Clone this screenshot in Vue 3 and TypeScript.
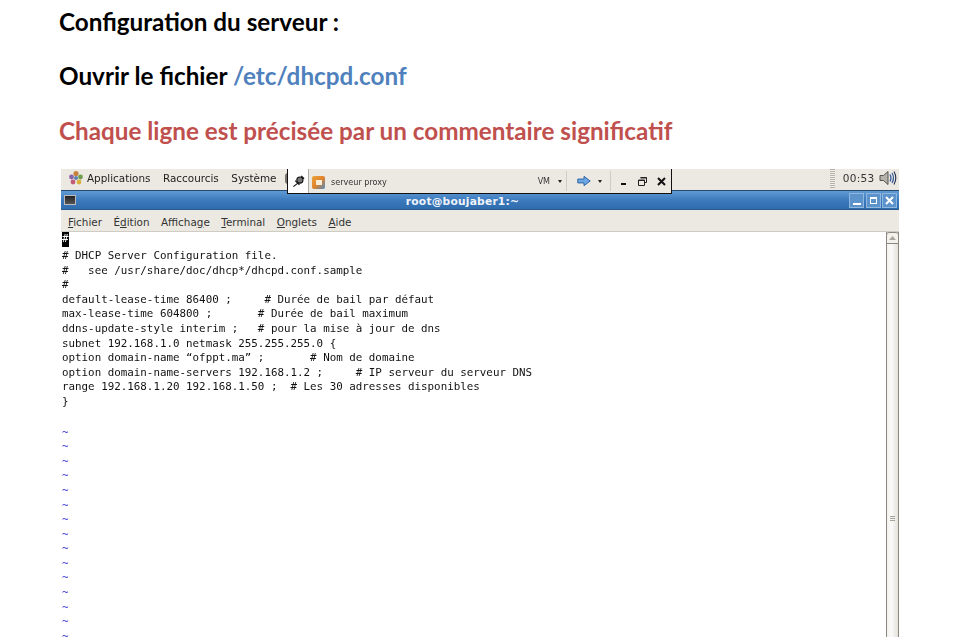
<script setup lang="ts">
const menus = [
  { pre: '', key: 'F', post: 'ichier' },
  { pre: 'É', key: 'd', post: 'ition' },
  { pre: 'Afficha', key: 'g', post: 'e' },
  { pre: '', key: 'T', post: 'erminal' },
  { pre: '', key: 'O', post: 'nglets' },
  { pre: '', key: 'A', post: 'ide' },
]
const config = `# DHCP Server Configuration file.
#   see /usr/share/doc/dhcp*/dhcpd.conf.sample
#
default-lease-time 86400 ;     # Durée de bail par défaut
max-lease-time 604800 ;       # Durée de bail maximum
ddns-update-style interim ;   # pour la mise à jour de dns
subnet 192.168.1.0 netmask 255.255.255.0 {
option domain-name “ofppt.ma” ;       # Nom de domaine
option domain-name-servers 192.168.1.2 ;     # IP serveur du serveur DNS
range 192.168.1.20 192.168.1.50 ;  # Les 30 adresses disponibles
}`
const tildes = Array.from({ length: 15 }, (_, i) => i)
</script>

<template>
  <main class="page">
    <h1 class="heading">Configuration du serveur :</h1>
    <h1 class="heading">Ouvrir le fichier <span class="path">/etc/dhcpd.conf</span></h1>
    <h1 class="heading red">Chaque ligne est précisée par un commentaire significatif</h1>

    <section class="shot">
      <div class="panel">
        <svg class="foot" viewBox="0 0 16 16" width="16" height="16">
          <circle cx="8" cy="3.500" r="2.600" fill="#c7813f" />
          <circle cx="3.500" cy="7" r="2.400" fill="#8a63a8" />
          <circle cx="12.500" cy="7" r="2.400" fill="#6f9e4f" />
          <circle cx="5" cy="12" r="2.400" fill="#c25a7a" />
          <circle cx="11" cy="12" r="2.400" fill="#d8b13f" />
          <circle cx="8" cy="8" r="2" fill="#5c7fb0" />
        </svg>
        <span class="panel-item">Applications</span>
        <span class="panel-item">Raccourcis</span>
        <span class="panel-item">Système</span>
        <span class="hidden-icon"></span>
        <span class="panel-spacer"></span>
        <span class="grip"></span>
        <span class="clock">00:53</span>
        <svg class="speaker" viewBox="0 0 18 16" width="18" height="16">
          <path d="M1 5.500h3.500L9 1.500v13l-4.500-4H1z" fill="#b5b2ab" stroke="#55534e" stroke-width="1" />
          <path d="M11 4.500q2 3.500 0 7M13 3q3 5 0 10" fill="none" stroke="#3a5f9c" stroke-width="1.300" />
          <path d="M15 1.500q3.600 6.500 0 13" fill="none" stroke="#22304f" stroke-width="1.100" />
        </svg>
      </div>

      <div class="titlebar">
        <span class="term-icon"></span>
        <span class="title">root@boujaber1:~</span>
        <span class="win-buttons">
          <span class="win-btn"><i class="glyph-min"></i></span>
          <span class="win-btn"><i class="glyph-max"></i></span>
          <span class="win-btn">
            <svg viewBox="0 0 9 9" width="9" height="9"><path d="M1 1l7 7M8 1l-7 7" stroke="#fff" stroke-width="2" /></svg>
          </span>
        </span>
      </div>

      <nav class="menubar">
        <span v-for="m in menus" :key="m.post" class="menu">{{ m.pre }}<u>{{ m.key }}</u>{{ m.post }}</span>
      </nav>

      <div class="terminal">
        <div class="term-text">
          <span class="cursor">#</span>
          <pre class="code">{{ config }}</pre>
          <div class="tildes">
            <div v-for="t in tildes" :key="t" class="tilde">~</div>
          </div>
        </div>
        <div class="scrollbar">
          <div class="scroll-up">
            <svg viewBox="0 0 7 4" width="7" height="4"><path d="M0 4l3.500-4L7 4z" fill="#a8a49c" /></svg>
          </div>
          <div class="scroll-grip"><i></i><i></i><i></i></div>
        </div>
      </div>

      <div class="vm-bar">
        <span class="pin">
          <svg viewBox="0 0 14 14" width="13" height="13">
            <circle cx="8.500" cy="5.500" r="3.300" fill="#777" stroke="#111" stroke-width="1.200" />
            <path d="M10 1l3 3M6 9l-4.500 3.500M3.500 6l4.500 4.500" fill="none" stroke="#111" stroke-width="1.300" />
          </svg>
        </span>
        <span class="vm-icon"><i></i></span>
        <span class="vm-name">serveur proxy</span>
        <span class="vm-label">VM</span>
        <span class="caret first"></span>
        <span class="vm-sep"></span>
        <svg class="arrow" viewBox="0 0 18 14" width="14" height="12">
          <path d="M1 4.500h8V1l8 6-8 6V9.500H1z" fill="#6aa7e6" stroke="#2d5f9e" stroke-width="1.200" />
        </svg>
        <span class="caret"></span>
        <span class="vm-sep second"></span>
        <span class="vm-ctl"><i class="ctl-min"></i></span>
        <span class="vm-ctl">
          <svg viewBox="0 0 9 9" width="9" height="9"><path d="M2.500.5h6v5H6.500M.5 3h6v5.500h-6zM.5 3.500h6M2.500 1h6" fill="none" stroke="#222" stroke-width="1" /></svg>
        </span>
        <span class="vm-ctl">
          <svg viewBox="0 0 9 9" width="9" height="9"><path d="M1 1l7 7M8 1l-7 7" stroke="#111" stroke-width="2" /></svg>
        </span>
      </div>
    </section>
  </main>
</template>

<style>
html, body { margin: 0; background: #fff; overflow: hidden; }
</style>

<style scoped>
.page {
  position: relative;
  height: 637px;
  overflow: hidden;
  padding: 0 0 0 59px;
  box-sizing: border-box;
  font-family: "Lato", "Liberation Sans", sans-serif;
}
.heading {
  margin: 0;
  height: 54.300px;
  padding-top: 8px;
  box-sizing: border-box;
  font-size: 24.250px;
  line-height: 28px;
  font-weight: 700;
  color: #000;
}
.path { color: #4f81bd; }
.red { color: #c0504d; }
.shot {
  position: absolute;
  left: 61px;
  top: 169px;
  width: 838px;
  height: 468px;
  display: flex;
  flex-direction: column;
  background: #fff;
  font-family: "DejaVu Sans", sans-serif;
  filter: blur(0.45px);
}
.panel {
  height: 21px;
  display: flex;
  align-items: center;
  padding: 0 2px 3px 7px;
  box-sizing: border-box;
  gap: 12.500px;
  background: #ece9e2;
  font-size: 10.400px;
  color: #222;
  flex: none;
}
.foot { margin-right: -9.500px; }
.hidden-icon {
  width: 6px;
  height: 11px;
  margin-left: -4px;
  background: #77746e;
  border-radius: 3px;
}
.panel-spacer { flex: 1; }
.grip {
  width: 5px;
  height: 19px;
  background: repeating-linear-gradient(#b4b1a9 0 1px, #f3f1ec 1px 2px);
  margin-right: -5px;
}
.clock { font-size: 10.500px; letter-spacing: 0.300px; color: #333; }
.speaker { margin-left: -8px; }
.titlebar {
  position: relative;
  height: 20px;
  flex: none;
  display: flex;
  align-items: center;
  justify-content: center;
  padding-top: 2px;
  background: linear-gradient(#5f9ad4, #3a78bb 55%, #2f6cad);
  border-top: 1px solid #274a70;
  border-bottom: 1px solid #2b5a8e;
  box-sizing: border-box;
}
.term-icon {
  position: absolute;
  left: 3px;
  top: 4px;
  width: 10px;
  height: 8px;
  background: linear-gradient(#222, #555);
  border: 1px solid #bbb;
}
.title {
  color: #eef3f9;
  font-size: 10.700px;
  font-weight: 700;
  letter-spacing: 0.200px;
  padding-right: 35px;
}
.win-buttons {
  position: absolute;
  right: 2px;
  top: 2px;
  display: flex;
  gap: 1.500px;
}
.win-btn {
  width: 15px;
  height: 15px;
  box-sizing: border-box;
  display: flex;
  align-items: center;
  justify-content: center;
  background: #5c93cb;
  border: 1px solid #8fb7df;
}
.glyph-min { width: 8px; height: 2px; background: #fff; margin-top: 6px; }
.glyph-max { width: 5px; height: 4px; border: 1px solid #fff; border-top-width: 2px; }
.menubar {
  height: 22px;
  flex: none;
  display: flex;
  align-items: center;
  gap: 11.500px;
  padding: 2px 0 0 7px;
  background: #ece9e2;
  border-bottom: 1px solid #cfccc4;
  box-sizing: border-box;
  font-size: 10.400px;
  color: #333;
}
.terminal {
  flex: 1;
  display: flex;
  min-height: 0;
  overflow: hidden;
}
.term-text {
  flex: 1;
  padding-left: 1px;
  font-family: "DejaVu Sans Mono", monospace;
  font-size: 10.850px;
  line-height: 14.600px;
  color: #111;
  min-width: 0;
}
.cursor {
  display: block;
  width: 7px;
  height: 15px;
  background: #000;
  color: #fff;
}
.code {
  margin: 0;
  padding-top: 2px;
  font: inherit;
  white-space: pre;
}
.tildes { padding-top: 16px; color: #3c3ccf; }
.tilde { height: 14.600px; }
.scrollbar {
  position: relative;
  width: 13px;
  flex: none;
  box-sizing: border-box;
  border-left: 1px solid #8a8780;
  border-right: 1px solid #8a8780;
  background: linear-gradient(90deg, #f4f2ee, #fafafa 40%, #e4e1da);
}
.scroll-up {
  height: 12px;
  box-sizing: border-box;
  border: 1px solid #8a8780;
  border-radius: 3px 3px 0 0;
  margin: 0 -1px;
  background: #f3f1ec;
  display: flex;
  align-items: center;
  justify-content: center;
}
.scroll-grip {
  position: absolute;
  left: 3px;
  top: 284px;
  width: 5px;
  display: flex;
  flex-direction: column;
  gap: 1px;
}
.scroll-grip i { display: block; height: 1px; background: #a5a29a; }
.vm-bar {
  position: absolute;
  left: 226px;
  top: 0;
  width: 385px;
  height: 25px;
  box-sizing: border-box;
  display: flex;
  align-items: center;
  background: #ece9e2;
  border: 1px solid #111;
  border-top: none;
  color: #333;
}
.pin {
  width: 20px;
  height: 24px;
  flex: none;
  display: flex;
  align-items: center;
  justify-content: center;
  background: #fff;
  border-right: 1px solid #b0ada5;
}
.vm-icon {
  margin: 2px 0 0 3px;
  width: 13px;
  height: 13px;
  flex: none;
  border-radius: 2px;
  background: linear-gradient(135deg, #e9a53c, #e2832a 50%, #4d8ac4);
  display: flex;
  align-items: center;
  justify-content: center;
}
.vm-icon i { width: 6px; height: 5px; background: #f8efd8; }
.vm-name { margin: 1px 0 0 6px; flex: 1; font-size: 8.100px; }
.vm-label { font-size: 8px; }
.caret {
  width: 0;
  height: 0;
  flex: none;
  border-left: 2.500px solid transparent;
  border-right: 2.500px solid transparent;
  border-top: 3px solid #222;
  margin-left: 7px;
}
.caret.first { margin-left: 8px; }
.vm-sep { width: 1px; height: 20px; flex: none; background: #cfccc4; margin: 0 10px 0 4px; }
.vm-sep.second { margin: 0 3px 0 8px; }
.arrow { flex: none; }
.vm-ctl {
  width: 19px;
  flex: none;
  display: flex;
  align-items: center;
  justify-content: center;
}
.ctl-min { display: block; width: 5px; height: 2px; background: #111; margin-top: 5px; }
</style>
